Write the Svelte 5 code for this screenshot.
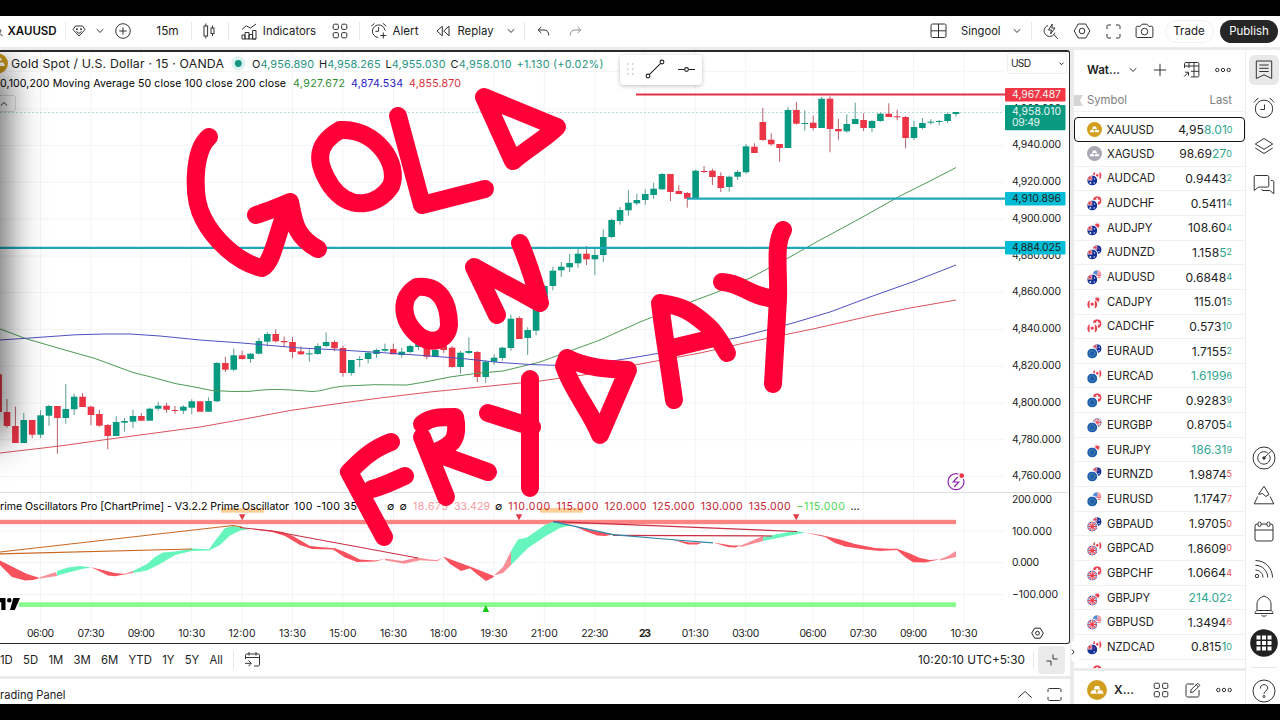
<script>
    // Price candles: direction, high, body top, body bottom, low
    const candles = [
        ['r', 372, 374.3, 412, 412], ['r', 399, 412, 426, 427.7], ['r', 406.7, 426, 443, 443], ['g', 413, 420, 443, 443],
        ['r', 420, 420, 434.7, 438], ['g', 410.3, 415.3, 434.7, 438], ['g', 405, 406, 415.7, 425.7], ['r', 406, 406, 418, 453.7],
        ['g', 384, 409, 418, 423.7], ['g', 393.7, 396.7, 409.3, 415], ['r', 393, 396.7, 407, 407], ['r', 405.7, 406.7, 415, 425.3],
        ['r', 410, 414, 425.7, 426.7], ['r', 424, 425, 436, 449.3], ['g', 416, 422, 436, 436], ['g', 418, 421, 422.7, 431.7],
        ['g', 409.7, 416, 421.7, 428], ['r', 413, 416, 420.7, 420.7], ['g', 407.7, 408.7, 420.7, 420.7], ['g', 401.7, 405.7, 408.7, 410.7],
        ['r', 402.7, 405.7, 409.7, 412.7], ['r', 406, 410, 411, 413.7], ['g', 405.3, 406.7, 410.7, 414], ['g', 399.3, 401.3, 407.7, 414.3],
        ['r', 401.3, 401.3, 411.7, 411.7], ['g', 397.3, 401, 411.7, 411.7], ['g', 362, 363, 401.3, 402], ['r', 356.7, 363, 369.7, 372],
        ['g', 348.7, 355.3, 369.7, 371.3], ['r', 350.7, 355.3, 359, 359.7], ['g', 353, 353.7, 359, 363], ['g', 338, 341, 353.7, 354.3],
        ['g', 332, 334, 341.7, 346.3], ['r', 329.3, 334, 341.3, 342.3], ['r', 336.7, 341, 342.3, 346.7], ['r', 337, 342, 352, 358],
        ['r', 346.3, 351.3, 354.3, 354.7], ['g', 349.3, 353.3, 354.3, 361.7], ['g', 343.3, 346, 354, 354.7], ['g', 332.3, 342, 346, 347.3],
        ['r', 340.3, 342, 348.3, 351], ['r', 345.7, 348, 373, 376.7], ['g', 360, 360, 373, 375.7], ['g', 356, 359, 360, 367],
        ['g', 352, 352.7, 359, 363.3], ['g', 348.7, 350, 354, 357.7], ['g', 343.7, 349, 350.7, 351.7], ['r', 343.7, 349, 354.3, 354.3],
        ['g', 348, 351.7, 355, 357.7], ['g', 344.7, 346, 352, 353.3], ['g', 343, 344, 347, 350], ['r', 345, 347, 356.7, 359.3],
        ['g', 345, 350, 357, 357.3], ['r', 343, 346, 350, 353], ['r', 346, 347.7, 367, 367.7], ['g', 351, 352.7, 367, 373.7],
        ['g', 337.3, 351, 353, 354.3], ['r', 351, 352, 377, 382.3], ['g', 360.7, 361.7, 377, 382.7], ['g', 354.3, 357.7, 361.7, 364.7],
        ['g', 346.7, 347.7, 358, 360.7], ['g', 314.7, 318.7, 348, 350.7], ['r', 316.3, 318, 339, 339], ['g', 327.3, 330, 338, 355],
        ['g', 306, 306.7, 330.7, 335.3], ['g', 285, 286, 306.7, 310], ['g', 266.7, 270.7, 286, 290.3], ['g', 262, 266.7, 270.3, 277],
        ['g', 254, 263, 267.3, 272], ['g', 246.7, 253.7, 263.3, 267.7], ['r', 246, 253.7, 259.3, 265], ['g', 248.3, 255, 259.3, 275],
        ['g', 229.3, 237, 255, 262], ['g', 218.7, 220, 237, 238], ['g', 207, 210, 221, 224.7], ['g', 190.3, 202.7, 210.3, 215.7],
        ['g', 193.7, 200, 203.3, 205.3], ['g', 189.3, 194, 200, 204.7], ['g', 182.7, 188.7, 195, 198.7], ['g', 173, 174, 189.3, 190],
        ['r', 174, 174, 192, 201], ['r', 185.3, 191, 194, 194.3], ['r', 192, 193, 198.7, 207.7], ['g', 169.7, 170.7, 198, 198],
        ['r', 166, 171, 171.7, 173], ['r', 168.7, 170.7, 177, 185], ['r', 172.3, 176, 188, 192], ['g', 175.7, 176.7, 187, 191.7],
        ['g', 170, 172, 176.7, 180], ['g', 144, 146.3, 172.3, 173.7], ['r', 143.3, 146.7, 153, 153], ['r', 108, 122, 140, 140.7],
        ['r', 133.3, 139.7, 144.3, 145.7], ['r', 144, 144, 148, 161.7], ['g', 107, 110, 148, 148], ['r', 102, 110, 123.7, 124.7],
        ['g', 110.3, 123, 123.7, 130.7], ['r', 115.7, 122.7, 128, 130.3], ['g', 97, 98.7, 128, 128], ['r', 96.3, 98.7, 129, 152.3],
        ['r', 118.7, 129, 131.3, 139.7], ['g', 114.3, 124, 131.3, 132.7], ['g', 102.7, 119, 124, 124.3], ['r', 113.3, 120, 128, 131],
        ['g', 120, 121, 128, 132], ['g', 112.7, 113.7, 121, 121.7], ['r', 103.3, 113.7, 117, 117], ['r', 109.7, 116.3, 117.3, 120.3],
        ['r', 116, 117, 138, 148.3], ['g', 120.7, 127, 138, 140], ['g', 118, 123, 128, 129.3], ['g', 119.3, 121.7, 122.7, 124.7],
        ['g', 120, 121, 122, 125.3], ['g', 112.7, 114, 121, 123], ['g', 112, 112, 114, 116.7]
    ];
    const candleX = (i) => -1.4 + i * 8.398;

    const times = [
        [40.5, '06:00'], [91, '07:30'], [141.3, '09:00'], [191.7, '10:30'], [242, '12:00'], [292.5, '13:30'], [343, '15:00'],
        [393.5, '16:30'], [443.5, '18:00'], [494, '19:30'], [544.3, '21:00'], [594.7, '22:30'], [645, '23'], [695.3, '01:30'],
        [745.7, '03:00'], [813, '06:00'], [863.3, '07:30'], [913.5, '09:00'], [964, '10:30']
    ];

    const prices = [
        [108, '4,960.000'], [144.5, '4,940.000'], [181.2, '4,920.000'], [218, '4,900.000'], [255, '4,880.000'], [291.6, '4,860.000'],
        [328.4, '4,840.000'], [365.2, '4,820.000'], [402, '4,800.000'], [438.7, '4,780.000'], [475.4, '4,760.000']
    ];
    const levels = [[499, '200.000', 40], [531, '100.000', 40], [562.5, '0.000', 27], [594.5, '−100.000', 46]];
    const bands = ['110.000', '115.000', '120.000', '125.000', '130.000', '135.000'];

    const ribbons = [
        ['#f9525f', '0,560.5 13,567 27,574 40,578 33,580 25,580.5 12,577 0,565'],
        ['#f98e96', '40,577.3 56,572 57,576 40,578.6'],
        ['#66f5bd', '57,571 68,567.5 80,566 91,567.5 82,569 57,575.5'],
        ['#f9525f', '91,567.3 115,573 126,574 115,576.2 108,575.5 100,571.5'],
        ['#f98e96', '124,574 133,571 133,573 124,574.8'],
        ['#66f5bd', '133,571 147,564 155,557 163,552.6 175,551.4 192,548.5 209,549.3 215,541 225,528 233,526 240,527 250,529 240,530.5 230,535.5 220,545 209,550.4 192,551 175,555 160,564 147,570.5 133,573'],
        ['#f9525f', '250,528.5 272,530.5 283,532 293,536 310,546 325,547.6 335,548.3 345,552 360,559.4 375,560.5 385,559 375,561.6 357,562 345,557.5 333,549.4 312,549 300,545 285,536 272,532'],
        ['#f98e96', '385,558.6 402,561 417,557.5 430,559.4 437,560 443,557.5 437,561.3 420,560.2 404,563.7 385,560.2'],
        ['#f9525f', '443,556.6 455,561 470,566.5 494,576 493,577.5 486,581 478,575 470,568.3 461,571 450,564'],
        ['#f98e96', '494,575.5 503,567 511,551 511,565 503,573'],
        ['#66f5bd', '511,551 518,539.5 527,537.5 545,525 555,521 570,525.5 560,528 545,536.5 528,548 511,565'],
        ['#f9525f', '573,525.5 590,530 613,534.6 605,536 597,535.5 585,531'],
        ['#f9525f', '672,539.5 690,542.5 703,542.6 697,544.5 688,544.5'],
        ['#f9525f', '713,542.6 732,545.6 741,545.6 735,547.5 728,547'],
        ['#f98e96', '741,545.4 763,536 763,541 740,547.2'],
        ['#66f5bd', '763,537 795,530.8 805,532.5 780,537.4 763,541'],
        ['#f9525f', '805,532.4 822,535.2 840,539.4 855,544 875,548 890,548.8 897,548.8 910,553.5 920,558 930,560 940,559.3 925,562.6 913,562.3 905,557 897,550 880,551 865,549.4 845,546.5 835,543 825,537'],
        ['#f98e96', '940,559.3 948,556 956,551 956,557 940,560.4']
    ];

    const strokes = [
        'M209 137 C193 150 192 197 203 218 C213 238 236 262 262 268 C274 262 276 232 290 202 C278 207 266 212 256 215 M290 202 C294 220 294 236 318 249',
        'M340 130 C312 146 318 166 331 186 C350 212 378 206 391 186 C400 164 376 128 340 130',
        'M398 116 L422 205 L485 189',
        'M484 97 L513 161 C530 147 546 138 557 127 Z',
        'M417 287 C399 297 401 320 418 335 C432 346 448 340 449 325 C449 304 440 284 417 287',
        'M497 315 L474 267 L540 303 C535 284 528 262 520 243',
        'M391 442 C372 449 361 460 349 472 L384 537 M405 476 C393 481 384 486 372 489',
        'M422 424 C430 417 440 417 455 417 C457 425 457 436 452 442 C446 448 440 450 434 453 M422 437 L446 497 M438 454 L488 472',
        'M488 413 L532 427 M530 379 V488',
        'M567 358 C587 368 606 369 628 370 L600 435 C591 412 572 390 564 366 Z',
        'M674 400 C670 370 663 330 660 303 C683 306 692 312 708 326 C716 333 722 344 727 353 M672 348 L714 338',
        'M722 282 C742 283 748 296 775 299 M783 230 C774 245 779 270 778 299 L773 384'
    ];

    // symbol, flag pair, plain part, tinted part, small digit, tint
    const pairs = [
        ['AUDCAD', 'au', 'ca', '0.9443', '', '2', 'up'],
        ['AUDCHF', 'au', 'ch', '0.5411', '', '4', 'up'],
        ['AUDJPY', 'au', 'jp', '108.60', '', '4', 'up'],
        ['AUDNZD', 'au', 'nz', '1.158', '5', '2', 'up'],
        ['AUDUSD', 'au', 'us', '0.6848', '', '4', 'up'],
        ['CADJPY', 'ca', 'jp', '115.01', '', '5', 'up'],
        ['CADCHF', 'ca', 'ch', '0.573', '1', '0', 'up'],
        ['EURAUD', 'eu', 'au', '1.7155', '', '2', 'up'],
        ['EURCAD', 'eu', 'ca', '', '1.6199', '6', 'up'],
        ['EURCHF', 'eu', 'ch', '0.9283', '', '9', 'up'],
        ['EURGBP', 'eu', 'gb', '0.8705', '', '4', 'up'],
        ['EURJPY', 'eu', 'jp', '', '186.31', '9', 'up'],
        ['EURNZD', 'eu', 'nz', '1.9874', '', '5', 'down'],
        ['EURUSD', 'eu', 'us', '1.1747', '', '7', 'down'],
        ['GBPAUD', 'gb', 'au', '1.9705', '', '0', 'down'],
        ['GBPCAD', 'gb', 'ca', '1.8609', '', '0', 'down'],
        ['GBPCHF', 'gb', 'ch', '1.0664', '', '4', 'down'],
        ['GBPJPY', 'gb', 'jp', '', '214.02', '2', 'up'],
        ['GBPUSD', 'gb', 'us', '1.3494', '', '6', 'down'],
        ['NZDCAD', 'nz', 'ca', '0.815', '1', '0', 'up']
    ];
    const rows = [
        ['XAUUSD', 'gold', '', '4,95', '8.01', '0', 'up'],
        ['XAGUSD', 'silver', '', '98.69', '27', '0', 'up'],
        ...pairs
    ];
    const ranges = ['1D', '5D', '1M', '3M', '6M', 'YTD', '1Y', '5Y', 'All'];
</script>

{#snippet chevron()}
    <svg class="ico" width="8" height="6" viewBox="0 0 8 6"><path d="M.7 1.2 4 4.4 7.3 1.2" /></svg>
{/snippet}

{#snippet dots()}
    <svg class="ico" width="18" height="8" viewBox="0 0 18 8"><circle cx="3.3" cy="4" r="1.7" /><circle cx="9" cy="4" r="1.7" /><circle cx="14.7" cy="4" r="1.7" /></svg>
{/snippet}

{#snippet tiles()}
    <svg class="ico" width="16" height="16" viewBox="0 0 16 16">
        <rect x="1.2" y="1.2" width="5.2" height="5.2" rx="1.2" /><rect x="9.6" y="1.2" width="5.2" height="5.2" rx="1.2" />
        <rect x="1.2" y="9.6" width="5.2" height="5.2" rx="1.2" /><rect x="9.6" y="9.6" width="5.2" height="5.2" rx="1.2" />
    </svg>
{/snippet}

{#snippet bullion(size, color)}
    <svg width={size} height={size} viewBox="0 0 20 20">
        <circle cx="10" cy="10" r="10" fill={color} />
        <path fill="#fff" d="M8 6h4l1.3 3.4H6.7zM5 10.2h4l.7 3.6H3.4zM11 10.2h4l1.6 3.6h-6.3z" />
    </svg>
{/snippet}

{#snippet flag(code)}
    <g clip-path="url(#round)">
        {#if code === 'au' || code === 'nz'}
            <rect width="10" height="10" fill="#12309a" />
            <path d="M0 0h5v5H0z" fill="#dfe3f4" />
            <path d="M0 0 5 5M5 0 0 5M2.5 0v5M0 2.5h5" stroke="#e0404c" stroke-width=".9" />
            <circle cx="7.3" cy="3.4" r=".7" fill={code === 'au' ? '#fff' : '#e0404c'} /><circle cx="7" cy="7.4" r=".7" fill="#fff" />
            {#if code === 'au'}<circle cx="3.2" cy="7.4" r=".9" fill="#fff" />{/if}
        {:else if code === 'ca'}
            <rect width="10" height="10" fill="#fff" />
            <path d="M0 0h2.4v10H0zM7.6 0H10v10H7.6zM5 2.6l.8 1.2.9-.1-.3 1.8L5 6.6 3.6 5.5l-.3-1.8.9.1z" fill="#ea4250" />
        {:else if code === 'ch'}
            <rect width="10" height="10" fill="#ea4250" />
            <path d="M4.1 2h1.8v2.1H8v1.8H5.9V8H4.1V5.9H2V4.1h2.1z" fill="#fff" />
        {:else if code === 'jp'}
            <rect width="10" height="10" fill="#f1f1f4" />
            <circle cx="5" cy="5" r="2.5" fill="#ea4250" />
        {:else if code === 'us'}
            <rect width="10" height="10" fill="#fff" />
            <path d="M0 .8h10M0 3.2h10M0 5.6h10M0 8h10" stroke="#ea4250" stroke-width="1.2" />
            <rect width="5" height="5" fill="#4a90e2" />
        {:else if code === 'gb'}
            <rect width="10" height="10" fill="#2f52b0" />
            <path d="M0 0 10 10M10 0 0 10M5 0v10M0 5h10" stroke="#fff" stroke-width="2.2" />
            <path d="M0 0 10 10M10 0 0 10M5 0v10M0 5h10" stroke="#ea4250" stroke-width="1.1" />
        {:else}
            <rect width="10" height="10" fill="#1b5fb4" />
            <circle cx="5" cy="5" r="2.7" fill="none" stroke="#cfc75e" stroke-width=".8" stroke-dasharray=".8 1.3" />
        {/if}
    </g>
{/snippet}

<div class="screen">
    <header class="toolbar">
        <div class="cell symbol">
            <svg class="ico lens" width="4" height="12" viewBox="0 0 4 12"><path d="M0 7.800C.6 7 .9 5.800.8 4.500M0 8.500 2.500 11.200" /></svg>
            <b>XAUUSD</b>
        </div>
        <div class="cell gem">
            <svg class="ico" width="14" height="12" viewBox="0 0 14 12"><path d="M3.4 1h7.2L13 4.6 7 11 1 4.6zM5 3.2v2M4 4.2h2M9 3.2v2M8 4.2h2M4.5 6.5 7 8.4l2.5-1.9" /></svg>
        </div>
        <div class="cell pick">{@render chevron()}</div>
        <div class="cell add">
            <svg class="ico" width="16" height="16" viewBox="0 0 16 16"><circle cx="8" cy="8" r="7.3" /><path d="M8 4.3v7.4M4.3 8h7.4" /></svg>
        </div>
        <div class="cell interval rule">15m</div>
        <div class="cell style rule">
            <svg class="ico" width="14" height="16" viewBox="0 0 14 16"><rect x="2" y="3" width="3.6" height="10" /><path d="M3.8.5V3M3.8 13v2.5M10.5 2.5V5M10.5 10.5V13" /><rect x="9" y="5" width="3" height="5.5" /></svg>
        </div>
        <div class="cell indicators">
            <svg class="ico" width="17" height="17" viewBox="0 0 17 17"><path d="M1 6.5 5.2 2.8 9.5 5 15 1M1 16v-4h3v4M4 16V9.5h4V16M8 16v-4.5h3.6V16M11.6 16V7.5H15V16zM1 16h14" /></svg>
            <span>Indicators</span>
        </div>
        <div class="cell layouts rule">{@render tiles()}</div>
        <div class="cell alert">
            <svg class="ico" width="18" height="18" viewBox="0 0 18 18"><path d="M15 8.5a6.3 6.3 0 1 0-6.8 7M8.6 5v4.3H5.4M1.2 4.2 4.5 1.4M13 1.4l3.3 2.8M13.3 10.5v6M10.3 13.5h6" /></svg>
            <span>Alert</span>
        </div>
        <div class="cell replay">
            <svg class="ico" width="14" height="12" viewBox="0 0 14 12"><path d="M6.3 1.2v9.6L1 6zM13 1.2v9.6L7.7 6z" /></svg>
            <span>Replay</span>
        </div>
        <div class="cell more rule">{@render chevron()}</div>
        <div class="cell undo">
            <svg class="ico" width="13" height="11" viewBox="0 0 13 11"><path d="M4.3 1 1.2 4l3.1 3M1.2 4H7c3 0 4.8 2 4.8 5.5" /></svg>
        </div>
        <div class="cell redo">
            <svg class="ico" width="13" height="11" viewBox="0 0 13 11"><path d="M8.7 1l3.1 3-3.1 3M11.8 4H6C3 4 1.2 6 1.2 9.5" /></svg>
        </div>
        <div class="spacer"></div>
        <div class="cell split">
            <svg class="ico" width="17" height="16" viewBox="0 0 17 16"><rect x="1" y="1" width="15" height="13.5" rx="1.5" /><path d="M8.5 1v13.5M1 7.8h15" /></svg>
        </div>
        <div class="cell user">Singool</div>
        <div class="cell menu rule">{@render chevron()}</div>
        <div class="cell quick">
            <svg class="ico" width="17" height="17" viewBox="0 0 17 17"><path d="M6 2.5a5.6 5.6 0 1 0 7 7.2M11.8 11.6l4 4.2M10.3 1 6.500 7h3L8.600 11l4.400-6H9.800z" /></svg>
        </div>
        <div class="cell quick">
            <svg class="ico" width="18" height="16" viewBox="0 0 18 16"><path d="M5.2 1h7.6L16.8 8l-4 7H5.2L1.2 8z" /><circle cx="9" cy="8" r="2.8" /></svg>
        </div>
        <div class="cell quick">
            <svg class="ico" width="15" height="15" viewBox="0 0 15 15"><path d="M1 5V2.2C1 1.5 1.5 1 2.2 1H5M10 1h2.8c.7 0 1.2.5 1.2 1.2V5M14 10v2.8c0 .7-.5 1.2-1.2 1.2H10M5 14H2.2C1.5 14 1 13.5 1 12.8V10" /></svg>
        </div>
        <div class="cell quick">
            <svg class="ico" width="19" height="16" viewBox="0 0 19 16"><path d="M2.3 3.3h3L7 1.2h5l1.7 2.1h3c.7 0 1.2.5 1.2 1.2v8.8c0 .7-.5 1.2-1.2 1.2H2.3c-.7 0-1.2-.5-1.2-1.2V4.5c0-.7.5-1.2 1.2-1.2z" /><circle cx="9.5" cy="8.6" r="3.3" /></svg>
        </div>
        <div class="trade">Trade</div>
        <div class="publish">Publish</div>
    </header>

    <div class="body">
        <main>
            <section class="chart">
                <svg class="plot" width="1068" height="590" viewBox="0 52 1068 590">
                    <g class="grid">
                        {#each times as [x]}
                            <line x1={x} x2={x} y1="52" y2="624" />
                        {/each}
                        <line x1="0" x2="1004" y1="71.3" y2="71.3" />
                        {#each prices as [y]}
                            <line x1="0" x2="1004" y1={y + 1} y2={y + 1} />
                        {/each}
                        {#each levels.slice(1) as [y]}
                            <line x1="0" x2="1004" y1={y} y2={y} />
                        {/each}
                    </g>
                    <line class="divider" x1="0" x2="1068" y1="492.5" y2="492.5" />
                    <line class="last" x1="0" x2="1004" y1="112.5" y2="112.5" />

                    {#each candles as [dir, high, top, bottom, low], i}
                        <g class={dir}>
                            <line x1={candleX(i)} x2={candleX(i)} y1={high} y2={low} />
                            <rect x={candleX(i) - 3.3} y={top} width="6.6" height={Math.max(bottom - top, 1)} />
                        </g>
                    {/each}

                    <g class="average">
                        <path stroke="#4e9a55" d="M0 329 27 339 65 350 95 358.5 133 372.5 155 378 175 383.5 192 386.5 212 390.5 233 391.5 250 391.3 C275 388 290 390 312 391.5 325 391 325 388 345 386 L375 384.7 407 385 425 382 450 377 475 373.5 503 371 540 362 570 351 600 340 640 322 680 306 720 291 750 278 790 257 820 240 860 218.5 900 196 930 181 956 167.5" />
                        <path stroke="#5050c0" d="M0 340 30 338 75 334.8 105 334 130 334 160 336 200 340 242 343 300 348 340 350 380 352.5 420 355.3 460 358.3 500 362.5 530 364.5 555 365.3 600 363 640 356.5 660 353 700 345 740 337 793 323 830 312 870 297 915 281 956 265" />
                        <path stroke="#d9535d" d="M0 453 60 446 110 439 155 433 200 427 242 419.5 290 410.5 335 404 380 398 430 392 480 387 540 381 590 374 640 364 700 353 740 344 815 328.5 870 316 910 308 956 300" />
                    </g>

                    <g class="level">
                        <line x1="636" x2="1005" y1="94.5" y2="94.5" stroke="#dd3545" />
                        <line x1="687" x2="1005" y1="198.700" y2="198.700" stroke="#1fa8ba" />
                        <line x1="0" x2="1005" y1="247.800" y2="247.800" stroke="#1fa8ba" />
                    </g>

                    <g class="axis">
                        {#each prices as [y, label]}
                            <text x="1012" y={y + 3.8} textLength="49">{label}</text>
                        {/each}
                        {#each levels as [y, label, width]}
                            <text x="1012" y={y + 3.8} textLength={width}>{label}</text>
                        {/each}
                        {#each times as [x, label]}
                            <text class:day={label === '23'} x={x} y="637" text-anchor="middle" textLength={label === '23' ? 12 : 27}>{label}</text>
                        {/each}
                    </g>
                    <g class="tag">
                        <rect x="1005" y="88" width="60.5" height="13.5" rx="1" fill="#f23645" />
                        <text class="light" x="1012" y="98" textLength="49">4,967.487</text>
                        <rect x="1005" y="105" width="60.5" height="25.3" rx="1" fill="#089981" />
                        <text class="light" x="1012" y="115" textLength="49">4,958.010</text>
                        <text class="light" x="1012" y="126.300" textLength="28">09:49</text>
                        <rect x="1005" y="192" width="60.5" height="13.5" rx="1" fill="#00bcd4" />
                        <text x="1012" y="202" textLength="49">4,910.896</text>
                        <rect x="1005" y="241" width="60.5" height="13.5" rx="1" fill="#00bcd4" />
                        <text x="1012" y="251" textLength="49">4,884.025</text>
                    </g>

                    <g class="currency">
                        <rect x="1007.5" y="53.5" width="59" height="20" rx="2" />
                        <text x="1011" y="67.3" textLength="20">USD</text>
                        <path d="M1059.5 62.7l2 2 2-2" />
                    </g>

                    <rect x="221" y="508" width="43" height="4.7" fill="#ffcf98" />
                    <rect x="540" y="508" width="43" height="4.7" fill="#ffcf98" />
                    <rect x="0" y="519.8" width="956" height="4.4" fill="#fc8584" />
                    <rect x="19" y="602.3" width="937" height="4.7" fill="#87fb8d" />
                    {#each ribbons as [color, points]}
                        <polygon fill={color} {points} />
                    {/each}
                    <g class="divergence">
                        <path stroke="#c9661f" d="M0 552 233 525.5 242 527M0 553.8 192 549" />
                        <path stroke="#c92f45" d="M240 527.5 272 531 418 558M553 521.7 797 531.5M613 535.3 772 536" />
                        <path stroke="#2c86a8" d="M553 521.7 613 534.7 670 539.5 713 542.8" />
                    </g>
                    <path fill="#e23947" d="M239 514.3h6.4l-3.2 6zM515.8 514.3h6.4l-3.2 6zM793 514.3h6.4l-3.2 6z" />
                    <path fill="#14c914" d="M482.5 612h6.6l-3.3-7z" />

                    <g class="legend">
                        <circle cx="-2" cy="63.5" r="10" fill="#c9981a" />
                        <path d="M-1 66 L5 66 3.5 62.5H-1zM-1 60.5h3l-1-2.5h-2z" fill="#fff" />
                        <text class="title" x="11" y="68.2" textLength="213">Gold Spot / U.S. Dollar · 15 · OANDA</text>
                        <circle cx="238.3" cy="63.5" r="7" fill="#dcf2ee" /><circle cx="238.3" cy="63.5" r="3.4" fill="#14967f" />
                        <text class="quote" x="252" y="67.7" textLength="62"><tspan>O</tspan>4,956.890</text>
                        <text class="quote" x="319" y="67.7" textLength="61.5"><tspan>H</tspan>4,958.265</text>
                        <text class="quote" x="385.5" y="67.7" textLength="60"><tspan>L</tspan>4,955.030</text>
                        <text class="quote" x="450.5" y="67.7" textLength="61"><tspan>C</tspan>4,958.010</text>
                        <text class="quote" x="516.5" y="67.7" textLength="87">+1.130 (+0.02%)</text>
                        <text x="0" y="87.3" textLength="286">0,100,200 Moving Average 50 close 100 close 200 close</text>
                        <text x="293" y="87.3" textLength="52" fill="#2f8a36">4,927.672</text>
                        <text x="351" y="87.3" textLength="52" fill="#2a22c4">4,874.534</text>
                        <text x="409" y="87.3" textLength="52" fill="#d8303c">4,855.870</text>
                        <text x="0" y="510.3" textLength="289">rime Oscillators Pro [ChartPrime] - V3.2.2 Prime Oscillator</text>
                        <text x="294" y="510.3" textLength="63">100 -100 35</text>
                        <text x="387" y="510.3">∅</text><text x="399.5" y="510.3">∅</text>
                        <text x="413" y="510.3" textLength="35" fill="#f49ba3">18.675</text>
                        <text x="454" y="510.3" textLength="36" fill="#f49ba3">33.429</text>
                        <text x="495" y="510.3">∅</text>
                        {#each bands as band, i}
                            <text x={508.3 + i * 48.1} y="510.3" textLength="42" fill="#c62231">{band}</text>
                        {/each}
                        <text x="796.5" y="510.3" textLength="48.5" fill="#4fd653">−115.000</text>
                        <text x="850.5" y="510.3">...</text>
                    </g>

                    <path class="brand" d="M0 598h5.5v12H1.3v-7.7H0zM13.3 598h6.7l-5.2 12H10zM7 600.2a2.3 2.3 0 1 0 4.6 0 2.3 2.3 0 1 0-4.6 0" />
                    <g class="flash">
                        <circle cx="956" cy="481.7" r="8" />
                        <path d="M957.7 477l-4.5 5h5.5l-4.5 5" />
                        <circle class="badge" cx="961.7" cy="475.7" r="3" />
                    </g>
                    <g class="nut">
                        <path d="M1034.7 628.2h5.6l3 5-3 5h-5.6l-3-5z" /><circle cx="1037.5" cy="633.2" r="1.9" />
                    </g>

                    <g class="marker">
                        {#each strokes as d}
                            <path {d} />
                        {/each}
                    </g>
                </svg>

                <button class="collapse" aria-label="Collapse"><svg class="ico" width="8" height="6" viewBox="0 0 8 6"><path d="M.9 4.5 4 1.5l3.1 3" /></svg></button>
                <div class="floating">
                    <svg width="82" height="30" viewBox="0 0 82 30">
                        <path class="grip" d="M7 9h1.5M12 9h1.5M7 14h1.5M12 14h1.5M7 19h1.5M12 19h1.5" />
                        <g class="tools"><path d="M29.3 19.7 40.7 8.3M58 14.5h6.5M68.5 14.5H75" /><circle cx="28" cy="21" r="1.9" /><circle cx="42" cy="7" r="1.9" /><circle cx="66.5" cy="14.5" r="1.9" /></g>
                    </svg>
                </div>
                <div class="edge"></div>
            </section>

            <section class="ranges">
                {#each ranges as range}
                    <span>{range}</span>
                {/each}
                <i></i>
                <svg class="ico" width="17" height="17" viewBox="0 0 17 17"><path d="M1.5 8V4.2C1.5 3.5 2 3 2.7 3h11.6c.7 0 1.2.5 1.2 1.2v9.6c0 .7-.5 1.2-1.2 1.2H10M1.5 6.5h14M5 1v3.5M12 1v3.5M1 12.3h6M4.5 9.5l2.8 2.8-2.8 2.8" /></svg>
                <time>10:20:10 UTC+5:30</time>
                <i></i>
                <div class="shrink">
                    <svg class="ico" width="14" height="14" viewBox="0 0 14 14"><path d="M8 1.5V6h4.5M1.5 8H6v4.5" /></svg>
                </div>
            </section>

            <section class="panel">
                <span>rading Panel</span>
                <svg class="ico" width="16" height="9" viewBox="0 0 16 9"><path d="M1.2 7.7 8 1.5l6.8 6.2" /></svg>
                <svg class="ico" width="15" height="15" viewBox="0 0 15 15"><path d="M1 5V3c0-1 .5-1.5 1.5-1.5h10c1 0 1.500.5 1.500 1.500v2M14 10v2c0 1-.5 1.500-1.500 1.500h-10C1.500 13.500 1 13 1 12v-2" /></svg>
            </section>
        </main>

        <aside class="watchlist">
            <div class="head">
                <b>Wat...</b>
                <span class="h-chev">{@render chevron()}</span>
                <svg class="ico" width="14" height="14" viewBox="0 0 14 14"><path d="M7 .8v12.4M.8 7h12.4" /></svg>
                <svg class="ico table" width="17" height="17" viewBox="0 0 17 17"><path d="M1.5 7V2.700c0-.7.5-1.200 1.200-1.200h12c.7 0 1.200.5 1.200 1.200v12c0 .7-.5 1.200-1.200 1.200H8M1.500 5h14.400M8 10.300h7.900M6 1.500V7M11 1.500v14.400M1.200 15.500l4.300-4.300M2 11.200h3.500v3.500" /></svg>
                {@render dots()}
            </div>
            <div class="columns">
                <svg width="9" height="11" viewBox="0 0 9 11"><path d="M0 0h9L6 5.5 9 11H0z" fill="#d5d5d5" /></svg>
                <span>Symbol</span>
                <span class="right">Last</span>
            </div>
            <div class="rows">
                {#each rows as [name, front, back, plain, tinted, small, tint], i}
                    <div class="row" class:selected={i === 0}>
                        {#if i === 0}
                            {@render bullion(15, '#d19e1d')}
                        {:else if i === 1}
                            {@render bullion(15, '#a9a9b5')}
                        {:else}
                            <svg width="15" height="16" viewBox="0 0 15 16">
                                <g transform="translate(5.8 1.2) scale(.88)">{@render flag(back)}</g>
                                <circle cx="5.2" cy="10.5" r="5.9" fill="#fff" />
                                <g transform="translate(.2 5.5) scale(1)">{@render flag(front)}</g>
                            </svg>
                        {/if}
                        <span class="name">{name}</span>
                        <span class="price">{plain}<em class={tint}>{tinted}<small>{small}</small></em></span>
                    </div>
                {/each}
                <div class="row cut">
                    <svg width="15" height="16" viewBox="0 0 15 16"><g transform="translate(5.8 1.2) scale(.88)">{@render flag('ch')}</g></svg>
                </div>
            </div>
            <div class="detail">
                {@render bullion(20, '#d19e1d')}
                <b>X...</b>
                {@render tiles()}
                <svg class="ico edit" width="16" height="16" viewBox="0 0 16 16"><path d="M9 2H2.5C1.7 2 1 2.7 1 3.5v10c0 .8.7 1.5 1.5 1.5h10c.8 0 1.5-.7 1.5-1.5V8M5.5 10.5l.6-2.8 6.6-6.5 2.2 2.2-6.6 6.5zM11.2 2.7l2.2 2.2" /></svg>
                {@render dots()}
            </div>
            <div class="handle"><svg class="ico" width="4" height="8" viewBox="0 0 4 8"><path d="M1 1.5 3 4 1 6.5" /></svg></div>
        </aside>

        <nav>
            <div class="tool active"><span><svg class="ico" width="18" height="20" viewBox="0 0 18 20"><path d="M1.3 1h15.4v17.5L9 14.8l-7.7 3.7zM4.3 5h9.4M4.3 8.3h9.4M4.3 11.5h9.4" /></svg></span></div>
            <div class="tool"><svg class="ico" width="22" height="22" viewBox="0 0 22 22"><circle cx="11" cy="11.8" r="8.7" /><path d="M11.5 7.5v5H7.3M1 5.5C2 3.8 3.5 2.3 5.5 1.3M21 5.5c-1-1.7-2.5-3.2-4.5-4.2" /></svg></div>
            <div class="tool"><svg class="ico" width="20" height="18" viewBox="0 0 20 18"><path d="M10 1.5 18.7 7 10 12.3 1.3 7zM1.3 11 10 16.5 18.7 11" /></svg></div>
            <div class="tool"><svg class="ico" width="22" height="21" viewBox="0 0 22 21"><path d="M2.5 1.5h12c.8 0 1.3.5 1.3 1.3v9c0 .8-.5 1.3-1.3 1.3H5.5L1.2 16.5V2.8c0-.8.5-1.3 1.3-1.3zM18 6.5h1.5c.8 0 1.3.5 1.3 1.3v12l-4-3.3H10c-.8 0-1.3-.5-1.3-1.3" /></svg></div>
            <div class="spacer"></div>
            <div class="tool low"><svg class="ico" width="24" height="24" viewBox="0 0 24 24"><circle cx="12" cy="12" r="11" /><path d="M15.7 7A6.2 6.2 0 1 0 17.5 9.2M12 12l7.8-7.5" /><circle cx="12" cy="12" r="1.2" fill="#222" /></svg></div>
            <div class="tool low"><svg class="ico" width="22" height="20" viewBox="0 0 22 20"><path d="M11 1.2 5.5 9.3l4-.8 3.3 3 3.2-2zM4.7 11.5 1.2 18.8h19.6l-3.7-7.3" /></svg></div>
            <div class="tool low"><svg class="ico" width="20" height="21" viewBox="0 0 20 21"><path d="M4 3H3a2 2 0 0 0-2 2v13a2 2 0 0 0 2 2h14a2 2 0 0 0 2-2V5a2 2 0 0 0-2-2h-1M7 3h6M1 9h18" /><rect x="4" y="1" width="3" height="4.500" rx="1.500" /><rect x="13" y="1" width="3" height="4.500" rx="1.500" /></svg></div>
            <div class="tool low"><svg class="ico" width="20" height="20" viewBox="0 0 20 20"><circle cx="3" cy="17" r="1.700" /><path d="M1.500 1.500C11 1.500 18.500 9 18.500 18.500M1.500 6.300c6.800 0 12.200 5.400 12.200 12.200M1.500 11c4 0 7.500 3.500 7.500 7.500" /></svg></div>
            <div class="tool low"><svg class="ico" width="20" height="22" viewBox="0 0 20 22"><path d="M3 15.5V9c0-4 3-6.5 7-8 4 1.5 7 4 7 8v6.5M1 18.5c0-1.5 1-3 2.5-3h13c1.5 0 2.5 1.5 2.5 3zM7.5 20.3c1.5 1.2 3.5 1.2 5 0" /></svg></div>
            <div class="tool low"><svg width="28" height="28" viewBox="0 0 28 28"><circle cx="14" cy="14" r="13.8" fill="#222" /><path d="M6.5 6.5h4v4h-4zM12 6.5h4v4h-4zM17.5 6.5h4v4h-4zM6.5 12h4v4h-4zM12 12h4v4h-4zM17.5 12h4v4h-4zM6.5 17.5h4v4h-4zM12 17.5h4v4h-4zM17.5 17.5h4v4h-4z" fill="#fff" /></svg></div>
            <hr />
            <div class="tool help"><svg class="ico" width="24" height="24" viewBox="0 0 24 24"><circle cx="12" cy="12" r="11" /><path d="M8.3 9.5c0-2.3 1.5-3.8 3.7-3.8s3.7 1.4 3.7 3.4c0 2.7-3.7 2.8-3.7 5.7" /><circle cx="12" cy="17.5" r="1" /></svg></div>
        </nav>
    </div>

    <svg width="0" height="0" class="defs"><clipPath id="round"><circle cx="5" cy="5" r="5" /></clipPath></svg>
</div>

<style>
    :global(body) {
        background: #000;
    }

    .screen {
        position: relative;
        box-sizing: border-box;
        width: 1280px;
        height: 720px;
        padding: 16px 0;
        overflow: hidden;
        background: #000;
        color: #222;
        font-family: Inter, "Liberation Sans", sans-serif;
        font-size: 12px;
    }

    .defs {
        position: absolute;
    }

    .ico {
        flex: none;
        fill: none;
        stroke: #333;
        stroke-width: 1;
    }

    .toolbar {
        display: flex;
        align-items: center;
        box-sizing: border-box;
        height: 34px;
        padding-bottom: 4px;
        background: linear-gradient(#fff 31px, #ebebeb 31px);
    }

    .cell {
        display: flex;
        align-items: center;
        justify-content: center;
        height: 18px;
        box-sizing: border-box;
    }

    .rule {
        border-right: 1px solid #e8e8e8;
    }

    .symbol {
        width: 66px;
        justify-content: flex-start;
        gap: 3.5px;
        border-right: 1px solid #eee;
    }

    .symbol b {
        color: #111;
        font-size: 11.5px;
        font-weight: 600;
    }

    .gem { width: 26px; }
    .pick { width: 15px; }
    .add { width: 32px; }

    .interval {
        width: 53px;
        padding-left: 5px;
        font-size: 11.8px;
    }

    .style { width: 37px; padding-right: 2px; }

    .indicators {
        width: 92px;
        gap: 5px;
        padding-left: 7px;
        font-size: 11.4px;
    }

    .layouts { width: 39px; }

    .alert {
        width: 65px;
        gap: 5px;
        padding-left: 3px;
        font-size: 11.6px;
    }

    .replay {
        width: 77px;
        gap: 7px;
        padding-left: 3px;
        font-size: 11.4px;
    }

    .more { width: 23px; padding-right: 4px; }
    .undo { width: 37px; }
    .redo { width: 26px; opacity: .55; }
    .spacer { flex: 1; }
    .split { width: 31px; }
    .user { width: 53px; font-size: 11.2px; }
    .menu { width: 25px; padding-right: 4px; }
    .quick { width: 31.3px; }
    .menu + .quick { margin-left: 3px; }

    .trade, .publish {
        box-sizing: border-box;
        height: 23px;
        border-radius: 12px;
        line-height: 22px;
        text-align: center;
        font-size: 11.5px;
    }

    .trade {
        width: 49px;
        margin-left: 4px;
        border: 1px solid #f0f0f0;
        line-height: 20px;
    }

    .publish {
        width: 58px;
        margin: 0 2px 0 6.5px;
        background: #262626;
        color: #fff;
    }

    .body {
        display: flex;
        height: 654px;
        background: #ebebeb;
    }

    main {
        display: flex;
        flex-direction: column;
        width: 1070px;
        margin-right: 4px;
    }

    .chart {
        position: relative;
        box-sizing: border-box;
        height: 593.5px;
        border: 1.5px solid #2a2a2a;
        border-width: 2px 1.5px 1.5px 0;
        border-radius: 0 3px 3px 0;
        background: #fff;
        overflow: hidden;
    }

    .plot {
        display: block;
    }

    .grid line {
        stroke: #f4f4f4;
        stroke-width: 1;
    }

    .divider {
        stroke: #dcdcdc;
    }

    .last {
        stroke: #b5ddd6;
        stroke-dasharray: 2 2;
    }

    .g line { stroke: #5e9c90; }
    .g rect { fill: #089981; }
    .r line { stroke: #b5606a; }
    .r rect { fill: #eb3445; }

    .average {
        fill: none;
        stroke-width: 1;
    }

    .level line {
        stroke-width: 2.2;
    }

    .axis text, .tag text {
        font-size: 10.4px;
        fill: #222;
    }

    .tag .light {
        fill: #e8f6f3;
    }

    .axis .day {
        font-weight: 700;
    }

    .currency rect {
        fill: #fff;
        stroke: #eee;
    }

    .currency text {
        font-size: 10.2px;
        fill: #222;
    }

    .currency path {
        fill: none;
        stroke: #222;
    }

    .divergence {
        fill: none;
        stroke-width: 1.2;
    }

    .legend text {
        font-size: 10.6px;
    }

    .legend .title {
        font-size: 12.3px;
        fill: #222;
    }

    .legend .quote {
        fill: #2b957f;
        font-size: 10.9px;
    }

    .quote tspan {
        fill: #222;
    }

    .flash {
        fill: none;
        stroke: #8e24aa;
        stroke-width: 1.2;
    }

    .flash .badge {
        fill: #f23645;
        stroke: #fff;
    }

    .nut {
        fill: none;
        stroke: #222;
    }

    .marker {
        fill: none;
        stroke: #ff0039;
        stroke-width: 18;
        stroke-linecap: round;
        stroke-linejoin: round;
    }

    .collapse {
        position: absolute;
        left: -8px;
        top: 43px;
        display: flex;
        align-items: center;
        justify-content: center;
        width: 24px;
        height: 17px;
        padding: 0;
        border: 1px solid #ddd;
        border-radius: 3px;
        background: #fff;
    }

    .floating {
        position: absolute;
        left: 620px;
        top: 3px;
        height: 30px;
        border-radius: 4px;
        background: #fff;
        box-shadow: 0 1px 4px rgba(0, 0, 0, 0.25);
    }

    .grip {
        stroke: #c4c4c4;
        stroke-width: 1.5;
    }

    .tools {
        fill: none;
        stroke: #222;
        stroke-width: 1.1;
    }

    /* shadow cast over the left side of the plot */
    .edge {
        position: absolute;
        left: -31px;
        top: 16px;
        width: 30px;
        height: 366px;
        box-shadow: 0 0 38px 5px rgba(0, 0, 0, 0.72);
    }

    .ranges {
        display: flex;
        align-items: center;
        box-sizing: border-box;
        height: 32px;
        background: #fff;
    }

    .ranges span {
        margin-right: 10.3px;
        font-size: 11.3px;
    }

    .ranges i {
        width: 1px;
        height: 18px;
        background: #e8e8e8;
    }

    .ranges > svg {
        margin-left: 10px;
    }

    .ranges time {
        margin: 0 8px 0 auto;
        font-size: 11.8px;
    }

    .shrink {
        display: flex;
        align-items: center;
        justify-content: center;
        width: 27px;
        height: 28px;
        margin: 0 5px 0 4px;
        border-radius: 4px;
        background: #ebebeb;
    }

    .panel {
        display: flex;
        align-items: center;
        box-sizing: border-box;
        height: 25px;
        margin-top: 3.5px;
        padding: 6px 8px 0 0;
        background: #fff;
        font-size: 11.1px;
    }

    .panel span {
        flex: 1;
    }

    .panel svg + svg {
        margin-left: 14px;
    }

    .watchlist {
        position: relative;
        display: flex;
        flex-direction: column;
        width: 171px;
        border-right: 1px solid #eee;
        background: #fff;
    }

    .head {
        display: flex;
        align-items: center;
        height: 40px;
        padding-left: 13px;
    }

    .head b {
        width: 42px;
        font-size: 11.6px;
        font-weight: 600;
    }

    .h-chev {
        width: 24px;
        margin-bottom: 3px;
    }

    .head .table {
        margin: 0 14px 0 16px;
    }

    .columns {
        display: flex;
        align-items: center;
        height: 21px;
        border-bottom: 1px solid #f1f1f1;
        color: #808080;
        font-size: 11.3px;
    }

    .columns span {
        margin-left: 4px;
    }

    .columns .right {
        margin: 0 13px 0 auto;
    }

    .rows {
        height: 551px;
        margin-top: 5.3px;
        overflow: hidden;
    }

    .row {
        display: flex;
        align-items: center;
        box-sizing: border-box;
        height: 24.66px;
        padding: 0 13px;
        border-bottom: 1px solid #f1f1f1;
    }

    .row.selected {
        padding: 0 11.5px;
        border: 1.5px solid #161616;
        border-radius: 4px;
    }

    .row.cut {
        border: 0;
    }

    .row svg {
        margin-right: 5px;
    }

    .name {
        font-size: 11.3px;
    }

    .price {
        margin-left: auto;
        font-size: 12.1px;
        white-space: nowrap;
    }

    .price em {
        font-style: normal;
    }

    .price small {
        position: relative;
        top: -1.5px;
        font-size: 9px;
    }

    .up { color: #2fa78f; }
    .down { color: #e5505c; }

    .detail {
        display: flex;
        align-items: center;
        box-sizing: border-box;
        height: 36px;
        padding: 4px 0 0 13px;
        border-top: 3px solid #ebebeb;
    }

    .detail b {
        width: 38.5px;
        margin-left: 7px;
        font-weight: 600;
    }

    .detail .edit {
        margin: 0 14px 0 16px;
    }

    .handle {
        position: absolute;
        left: -3px;
        top: 591px;
        display: flex;
        align-items: center;
        width: 8px;
        height: 21px;
        border-radius: 4px;
        background: #fff;
    }

    nav {
        display: flex;
        flex-direction: column;
        flex: 1;
        align-items: center;
        padding: 1px 0 0 1px;
        background: #fff;
    }

    .tool {
        display: flex;
        align-items: center;
        justify-content: center;
        height: 38px;
    }

    .tool.low {
        height: 37px;
    }

    .active span {
        display: flex;
        align-items: center;
        justify-content: center;
        width: 30px;
        height: 30px;
        border-radius: 6px;
        background: #e9e9e9;
    }

    nav hr {
        width: 26px;
        margin: 6px 0 9px;
        border: 0;
        border-top: 1px solid #e8e8e8;
    }

    .tool.help {
        height: 27px;
    }
</style>
